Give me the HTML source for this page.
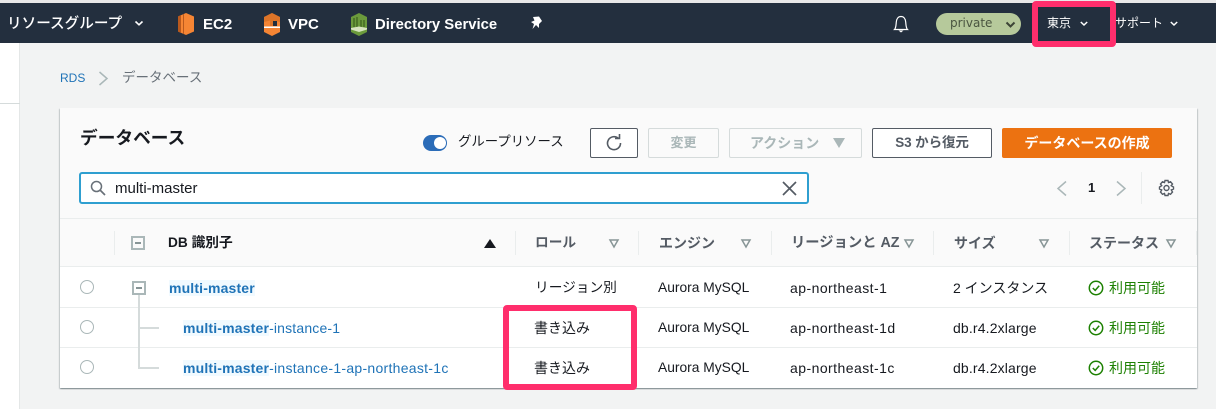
<!DOCTYPE html>
<html lang="ja"><head><meta charset="utf-8">
<style>
*{box-sizing:border-box}
html,body{margin:0;padding:0}
body{width:1216px;height:409px;position:relative;overflow:hidden;background:#f2f3f3;font-family:"Liberation Sans","Noto Sans CJK JP",sans-serif;font-size:14px;color:#16191f}
.a{position:absolute;white-space:nowrap;line-height:20px}
.b{position:absolute}
.w{color:#fff}
.btn{position:absolute;border:1px solid #545b64;border-radius:2px;background:#fff;text-align:center;height:30px;line-height:28px;font-weight:700;font-size:13px;color:#545b64}
.dis{border-color:#d5dbdb;color:#aab7b8;background:#fafafa}
.th{font-weight:700;color:#16191f}
.thg{font-weight:700;color:#545b64;font-size:14px}
.lnk{color:#1f73b7}
.hl{font-weight:700;background:#f1faff}
.ok{color:#1d8102;font-size:14px}
.radio{position:absolute;width:14px;height:14px;border:1px solid #aab7b8;border-radius:50%;background:#fff;left:80px}
.v{position:absolute;width:1px;background:#eaeded;top:231px;height:24px}
.h{position:absolute;left:60px;width:1137px;height:1px;background:#eaeded}
.pink{position:absolute;border:6px solid #ff2e6c;border-radius:4px}
svg{position:absolute;overflow:visible}
</style></head><body>
<div class="b" style="left:0;top:0;width:1216px;height:3px;background:#e8e8e8"></div>
<div class="b" style="left:0;top:3px;width:1216px;height:40px;background:#232f3e"></div>
<div class="b" style="left:0;top:43px;width:20px;height:366px;background:#fff;border-right:1px solid #e4e7e7"></div>
<div class="b" style="left:0;top:103px;width:20px;height:1px;background:#d5dbdb"></div>

<div class="a w" style="left:7px;top:14px;font-size:14.600px;font-weight:500">リソースグループ</div>
<svg style="left:134px;top:20px" width="10" height="7"><path d="M1.500 1.500 5 4.800 8.500 1.500" fill="none" stroke="#fff" stroke-width="1.600"/></svg>
<svg style="left:177px;top:13px" width="18" height="22" viewBox="0 0 18 22"><path d="M9 0 17 3.500V18.500L9 22 1 18.500V3.500Z" fill="#f58534"/><path d="M1 3.500 4 2V20L1 18.500ZM6 1.200 7 .8V21.200L6 20.800Z" fill="#b9591d"/></svg>
<div class="a w" style="left:203px;top:15px;font-size:15px;font-weight:700">EC2</div>
<svg style="left:263px;top:13px" width="18" height="23" viewBox="0 0 18 23"><path d="M9 0 17 4V19L9 23 1 19V4Z" fill="#f58534"/><path d="M1 13.500H17V15H1Z" fill="#fff"/><path d="M9 0 1 4V9L7 7.500V13H11V7.500L17 9V4Z" fill="#c9661f" opacity=".55"/><path d="M10 8H14V13H10Z" fill="#232f3e"/></svg>
<div class="a w" style="left:288px;top:15px;font-size:15px;font-weight:700">VPC</div>
<svg style="left:350px;top:13px" width="18" height="23" viewBox="0 0 18 23"><path d="M9 0 17 4V19L9 23 1 19V4Z" fill="#6b9a3c"/><path d="M4 5V14M7 4V14M11 7V14M14 7V14" stroke="#3f6420" stroke-width="1.300"/><path d="M1 15 9 13.500 17 15 17 16.500 9 19 1 16.500Z" fill="#d7e4c0"/></svg>
<div class="a w" style="left:375px;top:15px;font-size:14.850px;font-weight:700">Directory Service</div>
<svg style="left:530px;top:16px" width="14" height="15" viewBox="0 0 14 15"><path d="M3 1 9 .5 12 5 9 8 9 12 6 9 2.500 13 4 8 1 6 4.500 4.500Z" fill="#fff"/></svg>

<svg style="left:892px;top:14px" width="18" height="20" viewBox="0 0 18 20"><path d="M2.500 15.500C4 14 4 11 4.300 8 4.600 4.500 6.500 2.500 9 2.500S13.400 4.500 13.700 8C14 11 14 14 15.500 15.500Z" fill="none" stroke="#fff" stroke-width="1.200"/><path d="M6.500 16.500H11.500L9 18.500Z" fill="#fff"/></svg>
<div class="b" style="left:936px;top:13px;width:85px;height:22px;border-radius:11px;background:#b6c99b"></div>
<div class="a" style="left:950px;top:13px;color:#4a5540;font-family:'DejaVu Sans',sans-serif;font-size:12px">private</div>
<svg style="left:1005px;top:21px" width="11" height="8"><path d="M1.500 1.500 5.500 5.500 9.500 1.500" fill="none" stroke="#3c4436" stroke-width="2"/></svg>
<div class="a w" style="left:1047px;top:13px;font-size:12px">東京</div>
<svg style="left:1080px;top:21px" width="8" height="6"><path d="M.8 1 4 4 7.200 1" fill="none" stroke="#fff" stroke-width="1.500"/></svg>
<div class="a w" style="left:1115px;top:13px;font-size:12px">サポート</div>
<svg style="left:1170px;top:21px" width="8" height="6"><path d="M.8 1 4 4 7.200 1" fill="none" stroke="#fff" stroke-width="1.500"/></svg>

<div class="a lnk" style="left:60px;top:68px;font-size:12px">RDS</div>
<svg style="left:98px;top:71px" width="11" height="15"><path d="M1.500 1 9 7.500 1.500 14" fill="none" stroke="#aab7b8" stroke-width="1.500"/></svg>
<div class="a" style="left:122px;top:68px;color:#687078;font-size:13.500px">データベース</div>

<div class="b" style="left:60px;top:108px;width:1137px;height:280px;background:#fff;box-shadow:0 1px 1px 0 rgba(0,28,36,.3),1px 1px 1px 0 rgba(0,28,36,.15),-1px 1px 1px 0 rgba(0,28,36,.15)"></div>
<div class="b" style="left:60px;top:108px;width:1137px;height:159px;background:#fafafa;border-bottom:1px solid #eaeded"></div>
<div class="h" style="top:218px"></div>
<div class="h" style="top:307px"></div>
<div class="h" style="top:347px"></div>

<div class="a" style="left:80px;top:127px;font-size:17.700px;font-weight:700;line-height:22px">データベース</div>
<div class="b" style="left:423px;top:135px;width:24px;height:16px;border-radius:8px;background:#2b6cb8"></div>
<div class="b" style="left:434px;top:137px;width:12px;height:12px;border-radius:50%;background:#fff"></div>
<div class="a" style="left:458px;top:132px;font-size:13.400px">グループリソース</div>

<div class="btn" style="left:590px;top:128px;width:48px"></div>
<svg style="left:605px;top:133px" width="18" height="20" viewBox="0 0 18 20"><path d="M13.500 5.500A6.500 6.500 0 1 0 15.500 10" fill="none" stroke="#545b64" stroke-width="1.600"/><path d="M10 5.500H14.500V1" fill="none" stroke="#545b64" stroke-width="1.600"/></svg>
<div class="btn dis" style="left:648px;top:128px;width:71px">変更</div>
<div class="btn dis" style="left:729px;top:128px;width:133px;text-align:left;padding-left:20px;font-size:14px">アクション</div>
<svg style="left:832px;top:137px" width="14" height="12"><path d="M1 1H13L7 11Z" fill="#aab7b8"/></svg>
<div class="btn" style="left:872px;top:128px;width:120px;font-size:13.500px;letter-spacing:-.1px">S3 から復元</div>
<div class="btn" style="left:1002px;top:128px;width:170px;background:#ec7211;border-color:#ec7211;color:#fff;font-size:14px">データベースの作成</div>

<div class="b" style="left:79px;top:172px;width:730px;height:32px;background:#fff;border:2px solid #2f9fd0;border-radius:3px"></div>
<svg style="left:90px;top:180px" width="16" height="16"><circle cx="6.500" cy="6.500" r="5" fill="none" stroke="#687078" stroke-width="1.500"/><path d="M10 10 15 15" stroke="#687078" stroke-width="1.700"/></svg>
<div class="a" style="left:115px;top:179px;font-size:15px">multi-master</div>
<svg style="left:782px;top:181px" width="15" height="15"><path d="M1 1 14 14M14 1 1 14" stroke="#545b64" stroke-width="1.700"/></svg>
<svg style="left:1056px;top:180px" width="12" height="17"><path d="M10 1.500 2 8.500 10 15.500" fill="none" stroke="#aab7b8" stroke-width="1.500"/></svg>
<div class="a" style="left:1088px;top:178px;font-size:13px;font-weight:700">1</div>
<svg style="left:1115px;top:180px" width="12" height="17"><path d="M2 1.500 10 8.500 2 15.500" fill="none" stroke="#aab7b8" stroke-width="1.500"/></svg>
<div class="b" style="left:1141px;top:172px;width:1px;height:32px;background:#eaeded"></div>
<svg style="left:1158px;top:179px" width="17" height="18" viewBox="0 0 17 18"><path d="M7 1.500H10L10.500 3.500 12.500 2.700 14.500 5 13.200 6.700 15.500 8V10L13.300 11 14.500 13 12.500 15.300 10.500 14.500 10 16.500H7L6.500 14.500 4.500 15.300 2.500 13 3.700 11 1.500 10V8L3.700 6.700 2.500 5 4.500 2.700 6.500 3.500Z" fill="none" stroke="#545b64" stroke-width="1.400"/><circle cx="8.500" cy="9" r="2.500" fill="none" stroke="#545b64" stroke-width="1.400"/></svg>

<div class="v" style="left:114px"></div><div class="v" style="left:515px"></div><div class="v" style="left:638px"></div><div class="v" style="left:771px"></div><div class="v" style="left:933px"></div><div class="v" style="left:1069px"></div><div class="v" style="left:1196px"></div>

<div class="b" style="left:131px;top:236px;width:14px;height:14px;border:2px solid #aab7b8"></div>
<div class="b" style="left:135px;top:242px;width:6px;height:2px;background:#879596"></div>
<div class="a th" style="left:168px;top:233px;font-size:13.700px">DB 識別子</div>
<svg style="left:484px;top:239px" width="12" height="9"><path d="M6 0 12 9H0Z" fill="#16191f"/></svg>
<div class="a thg" style="left:535px;top:233px;font-size:13.700px">ロール</div>
<div class="a thg" style="left:659px;top:233px">エンジン</div>
<div class="a thg" style="left:791px;top:233px;font-size:14.300px">リージョンと AZ</div>
<div class="a thg" style="left:954px;top:233px">サイズ</div>
<div class="a thg" style="left:1089px;top:233px">ステータス</div>
<svg style="left:609px;top:239px" width="10" height="9"><path d="M1 1H9L5 8Z" fill="none" stroke="#879596" stroke-width="1.500"/></svg>
<svg style="left:741px;top:239px" width="10" height="9"><path d="M1 1H9L5 8Z" fill="none" stroke="#879596" stroke-width="1.500"/></svg>
<svg style="left:904px;top:239px" width="10" height="9"><path d="M1 1H9L5 8Z" fill="none" stroke="#879596" stroke-width="1.500"/></svg>
<svg style="left:1039px;top:239px" width="10" height="9"><path d="M1 1H9L5 8Z" fill="none" stroke="#879596" stroke-width="1.500"/></svg>
<svg style="left:1166px;top:239px" width="10" height="9"><path d="M1 1H9L5 8Z" fill="none" stroke="#879596" stroke-width="1.500"/></svg>

<div class="radio" style="top:280px"></div>
<div class="radio" style="top:320px"></div>
<div class="radio" style="top:360px"></div>
<div class="b" style="left:132px;top:281px;width:14px;height:14px;border:2px solid #aab7b8;background:#fff"></div>
<div class="b" style="left:136px;top:287px;width:6px;height:2px;background:#879596"></div>
<div class="b" style="left:138px;top:295px;width:2px;height:74px;background:#d5dbdb"></div>
<div class="b" style="left:138px;top:327px;width:21px;height:2px;background:#d5dbdb"></div>
<div class="b" style="left:138px;top:367px;width:21px;height:2px;background:#d5dbdb"></div>

<div class="a lnk" style="left:169px;top:278px;letter-spacing:.15px"><span class="hl">multi-master</span></div>
<div class="a lnk" style="left:183px;top:318px;letter-spacing:.17px"><span class="hl">multi-master</span>-instance-1</div>
<div class="a lnk" style="left:183px;top:358px;letter-spacing:.28px"><span class="hl" style="letter-spacing:.17px">multi-master</span>-instance-1-ap-northeast-1c</div>

<div class="a" style="left:535px;top:278px;font-size:13.700px">リージョン別</div>
<div class="a" style="left:534px;top:318px">書き込み</div>
<div class="a" style="left:534px;top:358px">書き込み</div>

<div class="a" style="left:658px;top:278px;font-size:13.800px">Aurora MySQL</div>
<div class="a" style="left:658px;top:318px;font-size:13.800px">Aurora MySQL</div>
<div class="a" style="left:658px;top:358px;font-size:13.800px">Aurora MySQL</div>
<div class="a" style="left:790px;top:278px;letter-spacing:.45px">ap-northeast-1</div>
<div class="a" style="left:790px;top:318px;letter-spacing:.45px">ap-northeast-1d</div>
<div class="a" style="left:790px;top:358px;letter-spacing:.45px">ap-northeast-1c</div>
<div class="a" style="left:953px;top:278px">2 インスタンス</div>
<div class="a" style="left:953px;top:318px;letter-spacing:.15px">db.r4.2xlarge</div>
<div class="a" style="left:953px;top:358px;letter-spacing:.15px">db.r4.2xlarge</div>

<svg style="left:1088px;top:280px" width="16" height="16"><circle cx="8" cy="8" r="6.700" fill="none" stroke="#1d8102" stroke-width="1.500"/><path d="M4.800 8 7.200 10.400 11.200 5.800" fill="none" stroke="#1d8102" stroke-width="1.500"/></svg>
<svg style="left:1088px;top:320px" width="16" height="16"><circle cx="8" cy="8" r="6.700" fill="none" stroke="#1d8102" stroke-width="1.500"/><path d="M4.800 8 7.200 10.400 11.200 5.800" fill="none" stroke="#1d8102" stroke-width="1.500"/></svg>
<svg style="left:1088px;top:360px" width="16" height="16"><circle cx="8" cy="8" r="6.700" fill="none" stroke="#1d8102" stroke-width="1.500"/><path d="M4.800 8 7.200 10.400 11.200 5.800" fill="none" stroke="#1d8102" stroke-width="1.500"/></svg>
<div class="a ok" style="left:1109px;top:278px">利用可能</div>
<div class="a ok" style="left:1109px;top:318px">利用可能</div>
<div class="a ok" style="left:1109px;top:358px">利用可能</div>

<div class="pink" style="left:1032px;top:1px;width:84px;height:46px"></div>
<div class="pink" style="left:503px;top:305px;width:134px;height:85px"></div>
</body></html>
